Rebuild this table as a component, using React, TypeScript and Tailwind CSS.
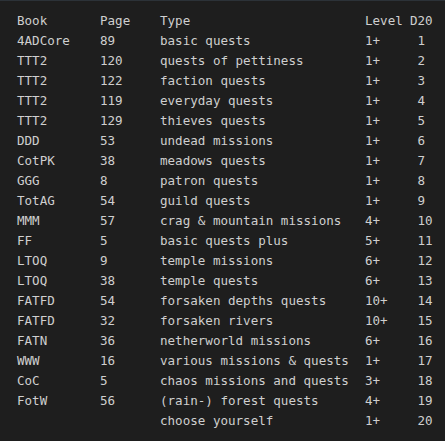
type Row = {
  book: string;
  page: string;
  type: string;
  level: string;
  d20: string;
};

const rows: Row[] = [
  { book: "4ADCore", page: "89", type: "basic quests", level: "1+", d20: "1" },
  { book: "TTT2", page: "120", type: "quests of pettiness", level: "1+", d20: "2" },
  { book: "TTT2", page: "122", type: "faction quests", level: "1+", d20: "3" },
  { book: "TTT2", page: "119", type: "everyday quests", level: "1+", d20: "4" },
  { book: "TTT2", page: "129", type: "thieves quests", level: "1+", d20: "5" },
  { book: "DDD", page: "53", type: "undead missions", level: "1+", d20: "6" },
  { book: "CotPK", page: "38", type: "meadows quests", level: "1+", d20: "7" },
  { book: "GGG", page: "8", type: "patron quests", level: "1+", d20: "8" },
  { book: "TotAG", page: "54", type: "guild quests", level: "1+", d20: "9" },
  { book: "MMM", page: "57", type: "crag & mountain missions", level: "4+", d20: "10" },
  { book: "FF", page: "5", type: "basic quests plus", level: "5+", d20: "11" },
  { book: "LTOQ", page: "9", type: "temple missions", level: "6+", d20: "12" },
  { book: "LTOQ", page: "38", type: "temple quests", level: "6+", d20: "13" },
  { book: "FATFD", page: "54", type: "forsaken depths quests", level: "10+", d20: "14" },
  { book: "FATFD", page: "32", type: "forsaken rivers", level: "10+", d20: "15" },
  { book: "FATN", page: "36", type: "netherworld missions", level: "6+", d20: "16" },
  { book: "WWW", page: "16", type: "various missions & quests", level: "1+", d20: "17" },
  { book: "CoC", page: "5", type: "chaos missions and quests", level: "3+", d20: "18" },
  { book: "FotW", page: "56", type: "(rain-) forest quests", level: "4+", d20: "19" },
  { book: "", page: "", type: "choose yourself", level: "1+", d20: "20" },
];

const RowLine = ({ row, head }: { row: Row; head?: boolean }) => (
  <div className="flex h-5 items-center whitespace-pre">
    <span className="w-[83px] shrink-0">{row.book}</span>
    <span className="w-[60px] shrink-0">{row.page}</span>
    <span className="w-[205px] shrink-0">{row.type}</span>
    <span className="w-[45px] shrink-0">{row.level}</span>
    <span className={head ? "" : "pl-[7.5px]"}>{row.d20}</span>
  </div>
);

export default function App() {
  return (
    <div className="h-[441px] w-[445px] border-t border-[#2c3238] bg-[#1e1e1e] pl-[17px] pt-[10px] font-['DejaVu_Sans_Mono',monospace] text-[12.55px] leading-5 text-[#cfcfcf]">
      <RowLine head row={{ book: "Book", page: "Page", type: "Type", level: "Level", d20: "D20" }} />
      {rows.map((r, i) => (
        <RowLine key={i} row={r} />
      ))}
    </div>
  );
}
